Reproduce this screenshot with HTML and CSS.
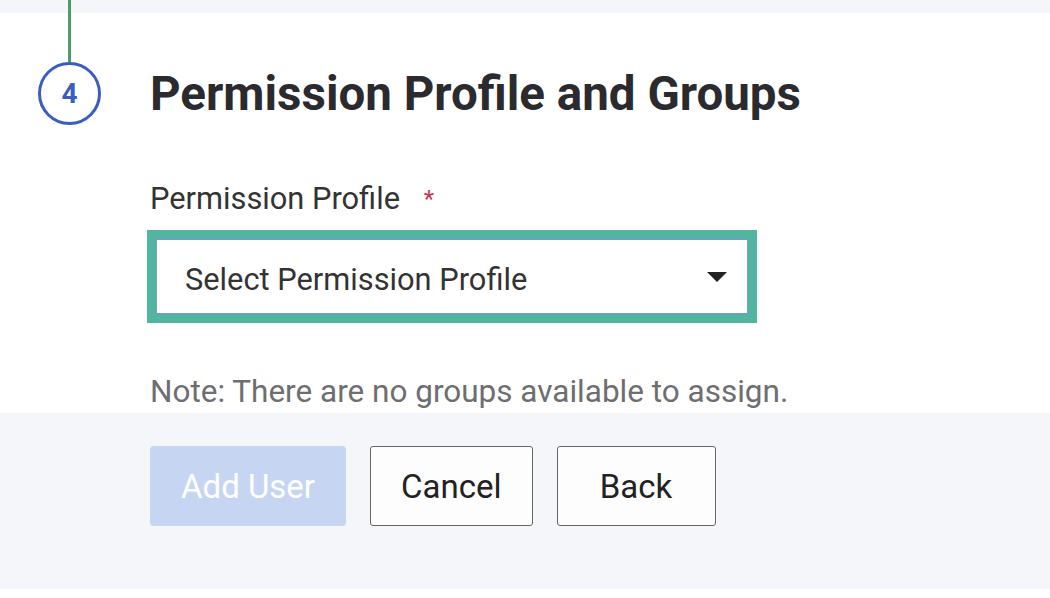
FILE: index.html
```html
<!DOCTYPE html>
<html>
<head>
	<title>Add User</title>
	<meta charset="utf-8">
	<link rel="stylesheet" href="styles.css">
</head>
<body>
	<div class="step">
		<div class="rail">
			<div class="line"></div>
			<div class="num">4</div>
		</div>
		<div class="content">
			<h2 class="title">Permission Profile and Groups</h2>
			<div class="label">Permission Profile <span class="req">*</span></div>
			<div class="select">
				<span>Select Permission Profile</span>
				<span class="caret"></span>
			</div>
			<p class="note">Note: There are no groups available to assign.</p>
		</div>
	</div>
	<div class="actions">
		<button class="btn primary">Add User</button>
		<button class="btn">Cancel</button>
		<button class="btn">Back</button>
	</div>
	<div class="foot"></div>
</body>
</html>
```

FILE: styles.css
```css
*{margin:0;padding:0;box-sizing:border-box;}
body{background:#f5f6fa;font-family:Roboto,"Liberation Sans",sans-serif;color:#2c2c30;}
.step{display:flex;background:#fff;margin-top:13px;height:400px;}
.rail{display:flex;flex-direction:column;align-items:center;width:63px;margin-left:38px;margin-right:49px;}
.line{width:3px;height:62px;margin-top:-13px;background:#4f9b68;}
.num{width:63px;height:63px;border:3px solid #3a5dbf;border-radius:50%;display:flex;align-items:center;justify-content:center;color:#3a5dbf;font-size:28px;font-weight:700;}
.content{display:flex;flex-direction:column;align-items:flex-start;}
.title{margin-top:50px;line-height:62px;font-size:47.5px;font-weight:700;color:#2b2b2f;}
.label{margin-top:58px;line-height:32px;font-size:30.8px;color:#333;}
.req{color:#c8324f;margin-left:16px;font-size:24px;vertical-align:2px;}
.select{margin-top:24px;margin-left:6px;width:592px;height:75px;border:1px solid #7d95dc;outline:9px solid #52b5a0;display:flex;align-items:center;justify-content:space-between;padding:5px 20px 0 28px;font-size:30.8px;color:#333;}
.caret{width:0;height:0;margin-top:-5px;border-left:10px solid transparent;border-right:10px solid transparent;border-top:10px solid #222;}
.note{margin-top:62px;line-height:32px;font-size:31.5px;color:#6e6e70;}
.actions{display:flex;gap:24px;height:176px;padding:33px 0 0 150px;}
.btn{height:80px;min-width:159px;padding:0 30px;border:1.5px solid #666;border-radius:3px;background:#fdfdfe;font-family:Roboto,"Liberation Sans",sans-serif;font-size:33px;color:#222;}
.btn.primary{background:#c6d6f2;border-color:#c6d6f2;color:#fff;}
.foot{height:9px;background:#fff;}
```
